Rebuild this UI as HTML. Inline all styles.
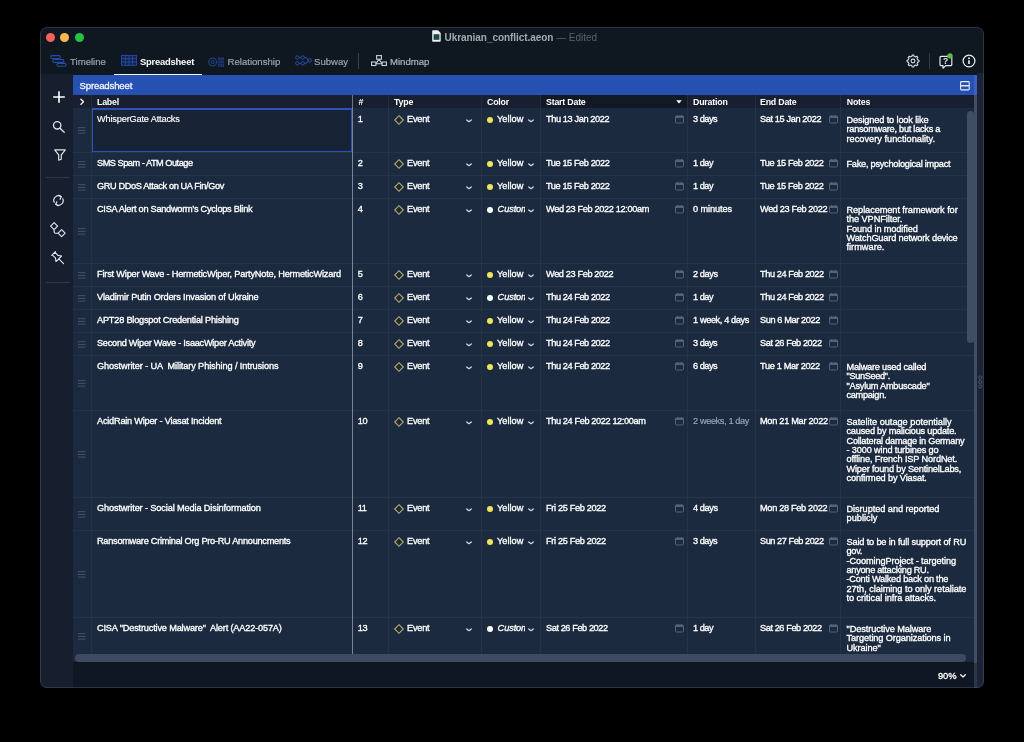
<!DOCTYPE html>
<html lang="en"><head><meta charset="utf-8"><title>Ukranian_conflict.aeon</title>
<style>
*{box-sizing:border-box;margin:0;padding:0}
html,body{width:1024px;height:742px;background:#000;overflow:hidden}
body{font-family:"Liberation Sans",sans-serif;color:#fff;position:relative}
.abs{position:absolute}
#win{position:absolute;left:40px;top:27px;width:944px;height:661px;background:#0f1721;border-radius:7px;overflow:hidden;will-change:transform}
#winborder{position:absolute;left:40px;top:27px;width:944px;height:661px;border-radius:7px;border:1px solid rgba(120,130,150,.28);pointer-events:none}
.tl{position:absolute;width:9px;height:9px;border-radius:50%;top:6px}
#title{position:absolute;left:404.5px;top:2px;height:18px;line-height:18px;font-size:10px;font-weight:bold;color:#a3a7ae;white-space:pre;letter-spacing:-0.05px}
#title i{font-style:normal;font-weight:normal;color:#5b606b}
.tab{position:absolute;top:27.5px;height:14px;line-height:14px;font-size:9.6px;color:#9aa2b1;white-space:pre;-webkit-text-stroke:0.2px #9aa2b1}
.tab.on{color:#fff;font-weight:bold;font-size:9.4px;letter-spacing:-0.2px;-webkit-text-stroke:0}
#side{position:absolute;left:0;top:47px;width:33px;height:614px;background:#171f2e}
#rstrip{position:absolute;left:936.5px;top:46px;width:8px;height:615px;background:#1a2436}
#vline{position:absolute;left:933.5px;top:68px;width:3px;height:567.5px;background:#414d65}
#vline2{position:absolute;left:933.5px;top:635.5px;width:3px;height:26px;background:#2b364b}
#bluehdr{position:absolute;left:33px;top:48px;width:903.5px;height:20px;background:#2650b2}
#bluehdr span{position:absolute;left:6.5px;top:3.5px;line-height:14px;font-size:9.6px;color:#f2f5fb;letter-spacing:-0.15px;-webkit-text-stroke:0.3px #f2f5fb}
#colhdr{position:absolute;left:33px;top:68px;width:900.5px;height:13px;background:#181f30}
.ch{position:absolute;top:1px;height:13px;line-height:13.5px;font-size:8.8px;font-weight:bold;color:#fff;white-space:pre;letter-spacing:-0.2px}
#grid{position:absolute;left:33px;top:81px;width:900.5px;height:554px;background:#1b2a3e;overflow:hidden}
.row{position:absolute;left:0;width:900.5px;border-top:1px solid #263449}
.hcol{position:absolute;left:0;top:0;width:18.5px;height:100%;background:#1c2a40;border-right:1px solid #243247}
.vl{position:absolute;top:0;width:1px;height:554px;background:#253348}
.c{position:absolute;top:6.4px;line-height:9.4px;font-size:9.2px;color:#fff;white-space:pre;-webkit-text-stroke:0.32px #fff}
.lab{left:24px;letter-spacing:-0.12px;top:6.4px}
.num{left:284.7px;letter-spacing:-0.35px;top:6.4px}
.typ{left:334px;top:6.4px}
.col{left:424px;top:6.4px}
.col.cu{font-style:italic;letter-spacing:-0.1px}
.sd{left:473px;letter-spacing:-0.29px}
.du{left:620px;letter-spacing:-0.2px}
.ed{left:687px;letter-spacing:-0.29px}
.nt{left:773.5px;letter-spacing:-0.07px;top:6.8px}
.dim{color:#97a0b0;-webkit-text-stroke:0.2px #97a0b0}
svg{position:absolute;overflow:visible}
#foot{position:absolute;left:33px;top:635.5px;width:900.5px;height:25.5px;background:#101724}
#foot span{position:absolute;left:865px;top:7px;font-size:9.4px;line-height:12px;color:#fff;letter-spacing:-0.15px;-webkit-text-stroke:0.3px #fff}
</style></head>
<body>
<div id="win">

<div class="tl" style="left:5.9px;background:#f4625c"></div>
<div class="tl" style="left:20.1px;background:#f7b84b"></div>
<div class="tl" style="left:34.7px;background:#25c045"></div>
<svg style="left:391.5px;top:3px" width="9" height="12" viewBox="0 0 9 12"><path d="M1 0.3h5l2.7 2.7v7.9a.8.8 0 0 1-.8.8H1a.8.8 0 0 1-.8-.8V1.100a.8.8 0 0 1 .8-.8z" fill="#eef0f3"/><rect x="1.600" y="4.200" width="5.800" height="5.600" fill="#1d4a44"/></svg>
<div id="title">Ukranian_conflict.aeon<i> — Edited</i></div>

<svg style="left:9.5px;top:27.5px" width="17" height="12" viewBox="0 0 17 12" fill="none" stroke="#264ca6" stroke-width="1.1"><rect x="0.8" y="0.6" width="9.500" height="2.900" rx="1.2"/><rect x="2.800" y="4.500" width="11" height="2.900" rx="1.2"/><rect x="7" y="8.400" width="9" height="2.900" rx="1.2"/></svg>
<div class="tab" style="left:30px">Timeline</div>
<svg style="left:81px;top:28px" width="16" height="11" viewBox="0 0 16 11"><rect x="0.5" y="0.5" width="15" height="9.800" fill="#12224a" stroke="#264ca6" stroke-width="0.9"/><path d="M0.5 3.700H15.500M0.5 7H15.500M4.300 0.5V10.300M8 0.5V10.300M11.700 0.5V10.300" stroke="#264ca6" stroke-width="0.9" fill="none"/></svg>
<div class="tab on" style="left:100px">Spreadsheet</div>
<div class="abs" style="left:73.500px;top:47px;width:88px;height:1.3px;background:#f4f6fa"></div>
<svg style="left:168px;top:29.5px" width="16" height="11" viewBox="0 0 16 11" fill="none" stroke="#23448f" stroke-width="1"><circle cx="4.600" cy="5" r="4"/><circle cx="4.600" cy="5" r="1.5"/><path d="M10.300 0.8h2v2h-2zM13.500 0.8h2v2h-2zM10.300 4.100h2v2h-2zM13.500 4.100h2v2h-2zM10.300 7.400h2v2h-2zM13.500 7.400h2v2h-2z" stroke-width="0.8"/></svg>
<div class="tab" style="left:187.500px">Relationship</div>
<svg style="left:254.500px;top:28px" width="17" height="11" viewBox="0 0 17 11" fill="none" stroke="#264ca6" stroke-width="1"><circle cx="2.300" cy="2.600" r="1.700"/><circle cx="7.800" cy="2.600" r="1.700"/><path d="M4 2.600h2.100M9.500 2.600h1.500c1.500 0 1.500 2.800 3 2.800"/><circle cx="2.300" cy="8.300" r="1.700"/><circle cx="7.800" cy="8.300" r="1.700"/><path d="M4 8.300h2.100M9.500 8.300h1.500c1.500 0 1.500-2.900 3-2.900"/><rect x="13" y="3.800" width="3.200" height="3.200" rx="0.8"/></svg>
<div class="tab" style="left:274px">Subway</div>
<div class="abs" style="left:318px;top:26px;width:1px;height:16px;background:#364053"></div>
<svg style="left:331px;top:28px" width="16" height="11" viewBox="0 0 16 11" fill="none" stroke="#c9ced8" stroke-width="1.100"><rect x="5.600" y="0.6" width="4.800" height="3.600"/><rect x="0.6" y="7" width="4.300" height="3.500"/><rect x="11.100" y="7" width="4.300" height="3.500"/><path d="M8 4.200L4.900 8.700M8 4.200L11.100 8.700M4.900 8.700H11.100"/></svg>
<div class="tab" style="left:350px;color:#aeb5c2;-webkit-text-stroke-color:#aeb5c2">Mindmap</div>

<svg style="left:865.500px;top:27.100px" width="14" height="14" viewBox="-7 -7 14 14" fill="none" stroke="#d3d8e0" stroke-width="1.150" stroke-linejoin="round"><path d="M4.67 -1.12 L5.95 -0.80 L5.95 0.80 L4.67 1.12 L4.09 2.51 L4.77 3.64 L3.64 4.77 L2.51 4.09 L1.12 4.67 L0.80 5.95 L-0.80 5.95 L-1.12 4.67 L-2.51 4.09 L-3.64 4.77 L-4.77 3.64 L-4.09 2.51 L-4.67 1.12 L-5.95 0.80 L-5.95 -0.80 L-4.67 -1.12 L-4.09 -2.51 L-4.77 -3.64 L-3.64 -4.77 L-2.51 -4.09 L-1.12 -4.67 L-0.80 -5.95 L0.80 -5.95 L1.12 -4.67 L2.51 -4.09 L3.64 -4.77 L4.77 -3.64 L4.09 -2.51z"/><circle r="1.900"/></svg>
<div class="abs" style="left:888.500px;top:26px;width:1px;height:16px;background:#2e3849"></div>
<svg style="left:898.500px;top:28px" width="15" height="15" viewBox="0 0 15 15" fill="none" stroke="#e3e7ee" stroke-width="1.200"><path d="M2.200 1.400h9.400a1.200 1.200 0 0 1 1.200 1.200v6.800a1.200 1.200 0 0 1-1.200 1.200h-4.900l-2.700 2.600v-2.600h-1.800a1.200 1.200 0 0 1-1.200-1.200v-6.800a1.200 1.200 0 0 1 1.200-1.200z" stroke-linejoin="round"/><text x="6.700" y="9.200" font-family="Liberation Sans, sans-serif" font-size="8.500" font-weight="bold" fill="#e3e7ee" stroke="none" text-anchor="middle">?</text><circle cx="11" cy="0.9" r="2.700" fill="#63b945" stroke="none"/></svg>
<svg style="left:922.300px;top:27.200px" width="14" height="14" viewBox="-7 -7 14 14" fill="none" stroke="#f1f3f7" stroke-width="1.200"><circle r="5.900"/><path d="M0 -0.700V3.100" stroke-width="1.600"/><circle cy="-2.700" r="0.950" fill="#f1f3f7" stroke="none"/></svg>

<div id="side">
<svg style="left:12.500px;top:16.5px" width="12" height="12" viewBox="0 0 12 12" stroke="#fff" stroke-width="1.600" fill="none"><path d="M6 0.200V11.800M0.200 6H11.800"/></svg>
<svg style="left:12px;top:45.5px" width="13" height="13" viewBox="0 0 13 13" stroke="#dfe3ea" stroke-width="1.300" fill="none"><circle cx="5.200" cy="5.300" r="3.700"/><path d="M8 8.200L12.200 12.300" stroke-linecap="round"/></svg>
<svg style="left:13.500px;top:75px" width="12" height="12" viewBox="0 0 12 12" stroke="#dfe3ea" stroke-width="1.200" fill="none" stroke-linejoin="round"><path d="M0.700 0.900H11.300L7.300 5.800V10.200L4.700 11.200V5.800z"/></svg>
<div class="abs" style="left:5.500px;top:103px;width:24px;height:1px;background:#2f394b"></div>
<svg style="left:11.500px;top:120px" width="13" height="13" viewBox="-6.500 -6.500 13 13" stroke="#dfe3ea" stroke-width="1.200" fill="none" stroke-linecap="round" stroke-linejoin="round"><path d="M-4.300 1.800A4.600 4.600 0 0 1 2.600 -3.800M4.300 -1.800A4.600 4.600 0 0 1 -2.600 3.800"/><path d="M0.300 -5.300L2.800 -3.700 1.600 -1.200M-0.300 5.300L-2.800 3.700 -1.600 1.200"/></svg>
<svg style="left:10px;top:148px" width="16" height="16" viewBox="0 0 16 16" stroke="#dfe3ea" stroke-width="1.150" fill="none" stroke-linejoin="round"><path d="M4.100 0.700L7.600 4.200 4.100 7.700 0.600 4.200zM11.600 7.700L15.100 11.200 11.600 14.700 8.100 11.200z"/><path d="M4.100 7.700V9.700Q4.100 11.200 5.600 11.200H8.100"/></svg>
<svg style="left:10.500px;top:176.5px" width="15" height="15" viewBox="-7.500 -7.500 15 15" stroke="#dfe3ea" stroke-width="1.150" fill="none" stroke-linejoin="round" stroke-linecap="round"><g transform="rotate(-45)"><path d="M-2.600 -7H2.600M-1.800 -7V-2.600L-3.900 0.400H3.900L1.800 -2.600V-7M0 0.400V7.200"/></g></svg>
<div class="abs" style="left:5.500px;top:207.5px;width:24px;height:1px;background:#2f394b"></div>
</div>
<div id="rstrip"><svg style="left:1.300px;top:302px" width="5" height="14" viewBox="0 0 5 14" fill="none" stroke="#4f5b73" stroke-width="0.9"><circle cx="2.300" cy="2.500" r="1.600"/><circle cx="2.300" cy="7" r="1.600"/><circle cx="2.300" cy="11.500" r="1.600"/></svg></div>
<div id="vline"></div><div id="vline2"></div>
<div id="bluehdr"><span>Spreadsheet</span>
<svg style="left:887px;top:5.500px" width="10" height="10" viewBox="0 0 10 10" fill="none" stroke="#e4eaf7" stroke-width="1.100"><rect x="0.600" y="0.600" width="8.600" height="8.300" rx="0.8"/><path d="M0.600 4.750H9.200" stroke-width="1.700"/></svg>
</div>
<div class="abs" style="left:933.500px;top:48px;width:3px;height:20px;background:#3a60c6"></div>
<div id="colhdr">
<div class="abs" style="left:467.500px;top:0;width:146.500px;height:13px;background:#111925"></div>
<svg style="left:6.500px;top:3.200px" width="5" height="8" viewBox="0 0 5 8" fill="none" stroke="#fff" stroke-width="1.300" stroke-linecap="round" stroke-linejoin="round"><path d="M0.900 1.200L3.500 3.800 0.900 6.400"/></svg>
<div class="ch" style="left:24px">Label</div>
<div class="ch" style="left:285.5px">#</div>
<div class="ch" style="left:321px">Type</div>
<div class="ch" style="left:414px">Color</div>
<div class="ch" style="left:473px">Start Date</div>
<div class="ch" style="left:620px">Duration</div>
<div class="ch" style="left:687px">End Date</div>
<div class="ch" style="left:773.75px">Notes</div>
<svg style="left:602.500px;top:5px" width="6" height="4" viewBox="0 0 6 4"><path d="M0.200 0.300H5.800L3 3.500z" fill="#fff"/></svg>
<div class="abs" style="left:18px;top:0;width:1px;height:13px;background:#222d42"></div>
<div class="abs" style="left:279.4px;top:0;width:0.9px;height:13px;background:#6b7585"></div>
<div class="abs" style="left:314.5px;top:0;width:1px;height:13px;background:#222d42"></div>
<div class="abs" style="left:408px;top:0;width:1px;height:13px;background:#222d42"></div>
<div class="abs" style="left:467px;top:0;width:1px;height:13px;background:#222d42"></div>
<div class="abs" style="left:613.5px;top:0;width:1px;height:13px;background:#222d42"></div>
<div class="abs" style="left:682px;top:0;width:1px;height:13px;background:#222d42"></div>
<div class="abs" style="left:767px;top:0;width:1px;height:13px;background:#222d42"></div>
</div>
<div id="grid">
<div class="row" style="top:0px;height:44px;border-top-color:#1b2a3e">
<div class="hcol"></div>
<svg style="left:5px;top:18.3px" width="8" height="7" viewBox="0 0 8 7" stroke="#465266" stroke-width="1" fill="none"><path d="M0 0.700H7.500M0 3.400H7.500M0 6.100H7.500"/></svg>
<div class="c lab"><span style="letter-spacing:-0.164px">WhisperGate Attacks</span></div>
<div class="c num">1</div>
<svg style="left:321px;top:5.500px" width="10" height="10" viewBox="0 0 10 10" fill="#25291f" stroke="#aca78c" stroke-width="1.100"><path d="M5 0.700L9.300 5 5 9.300 0.700 5z"/></svg>
<div class="c typ"><span style="letter-spacing:-0.225px">Event</span></div>
<svg style="left:393px;top:10px" width="6" height="4" viewBox="0 0 6 4" fill="none" stroke="#d4d9e2" stroke-width="1.300" stroke-linecap="round" stroke-linejoin="round"><path d="M0.700 0.900L3 2.700 5.300 0.900"/></svg>
<div class="abs" style="left:413.700px;top:8px;width:6.200px;height:6.200px;border-radius:50%;background:#ece466;box-shadow:0 0 0 0.600px #2c2f1a"></div>
<div class="c col"><span style="letter-spacing:0.023px">Yellow</span></div>
<svg style="left:454.5px;top:10px" width="6" height="4" viewBox="0 0 6 4" fill="none" stroke="#d4d9e2" stroke-width="1.300" stroke-linecap="round" stroke-linejoin="round"><path d="M0.700 0.900L3 2.700 5.300 0.900"/></svg>
<div class="c sd"><span style="letter-spacing:-0.383px">Thu 13 Jan 2022</span></div>
<svg style="left:601.5px;top:6.200px" width="9" height="8.500" viewBox="0 0 9 8.500" fill="none" stroke="#55637a" stroke-width="1"><rect x="0.5" y="1" width="8" height="7" rx="0.9"/><rect x="0.5" y="1" width="8" height="2" fill="#55637a" stroke="none"/><path d="M2.600 0V1.200M6.400 0V1.200"/></svg>
<div class="c du"><span style="letter-spacing:-0.496px">3 days</span></div>
<div class="c ed"><span style="letter-spacing:-0.38px">Sat 15 Jan 2022</span></div>
<svg style="left:755.5px;top:6.200px" width="9" height="8.500" viewBox="0 0 9 8.500" fill="none" stroke="#55637a" stroke-width="1"><rect x="0.5" y="1" width="8" height="7" rx="0.9"/><rect x="0.5" y="1" width="8" height="2" fill="#55637a" stroke="none"/><path d="M2.600 0V1.200M6.400 0V1.200"/></svg>
<div class="c nt"><span style="letter-spacing:-0.134px">Designed to look like</span><br><span style="letter-spacing:-0.258px">ransomware, but lacks a</span><br><span style="letter-spacing:0.019px">recovery functionality.</span></div>
</div>
<div class="row" style="top:44px;height:23px">
<div class="hcol"></div>
<svg style="left:5px;top:7.8px" width="8" height="7" viewBox="0 0 8 7" stroke="#465266" stroke-width="1" fill="none"><path d="M0 0.700H7.500M0 3.400H7.500M0 6.100H7.500"/></svg>
<div class="c lab"><span style="letter-spacing:-0.472px">SMS Spam - ATM Outage</span></div>
<div class="c num">2</div>
<svg style="left:321px;top:5.500px" width="10" height="10" viewBox="0 0 10 10" fill="#25291f" stroke="#aca78c" stroke-width="1.100"><path d="M5 0.700L9.300 5 5 9.300 0.700 5z"/></svg>
<div class="c typ"><span style="letter-spacing:-0.225px">Event</span></div>
<svg style="left:393px;top:10px" width="6" height="4" viewBox="0 0 6 4" fill="none" stroke="#d4d9e2" stroke-width="1.300" stroke-linecap="round" stroke-linejoin="round"><path d="M0.700 0.900L3 2.700 5.300 0.900"/></svg>
<div class="abs" style="left:413.700px;top:8px;width:6.200px;height:6.200px;border-radius:50%;background:#ece466;box-shadow:0 0 0 0.600px #2c2f1a"></div>
<div class="c col"><span style="letter-spacing:0.023px">Yellow</span></div>
<svg style="left:454.5px;top:10px" width="6" height="4" viewBox="0 0 6 4" fill="none" stroke="#d4d9e2" stroke-width="1.300" stroke-linecap="round" stroke-linejoin="round"><path d="M0.700 0.900L3 2.700 5.300 0.900"/></svg>
<div class="c sd"><span style="letter-spacing:-0.414px">Tue 15 Feb 2022</span></div>
<svg style="left:601.5px;top:6.200px" width="9" height="8.500" viewBox="0 0 9 8.500" fill="none" stroke="#55637a" stroke-width="1"><rect x="0.5" y="1" width="8" height="7" rx="0.9"/><rect x="0.5" y="1" width="8" height="2" fill="#55637a" stroke="none"/><path d="M2.600 0V1.200M6.400 0V1.200"/></svg>
<div class="c du"><span style="letter-spacing:-0.471px">1 day</span></div>
<div class="c ed"><span style="letter-spacing:-0.414px">Tue 15 Feb 2022</span></div>
<svg style="left:755.5px;top:6.200px" width="9" height="8.500" viewBox="0 0 9 8.500" fill="none" stroke="#55637a" stroke-width="1"><rect x="0.5" y="1" width="8" height="7" rx="0.9"/><rect x="0.5" y="1" width="8" height="2" fill="#55637a" stroke="none"/><path d="M2.600 0V1.200M6.400 0V1.200"/></svg>
<div class="c nt"><span style="letter-spacing:-0.249px">Fake, psychological impact</span></div>
</div>
<div class="row" style="top:67px;height:23px">
<div class="hcol"></div>
<svg style="left:5px;top:7.8px" width="8" height="7" viewBox="0 0 8 7" stroke="#465266" stroke-width="1" fill="none"><path d="M0 0.700H7.500M0 3.400H7.500M0 6.100H7.500"/></svg>
<div class="c lab"><span style="letter-spacing:-0.357px">GRU DDoS Attack on UA Fin/Gov</span></div>
<div class="c num">3</div>
<svg style="left:321px;top:5.500px" width="10" height="10" viewBox="0 0 10 10" fill="#25291f" stroke="#aca78c" stroke-width="1.100"><path d="M5 0.700L9.300 5 5 9.300 0.700 5z"/></svg>
<div class="c typ"><span style="letter-spacing:-0.225px">Event</span></div>
<svg style="left:393px;top:10px" width="6" height="4" viewBox="0 0 6 4" fill="none" stroke="#d4d9e2" stroke-width="1.300" stroke-linecap="round" stroke-linejoin="round"><path d="M0.700 0.900L3 2.700 5.300 0.900"/></svg>
<div class="abs" style="left:413.700px;top:8px;width:6.200px;height:6.200px;border-radius:50%;background:#ece466;box-shadow:0 0 0 0.600px #2c2f1a"></div>
<div class="c col"><span style="letter-spacing:0.023px">Yellow</span></div>
<svg style="left:454.5px;top:10px" width="6" height="4" viewBox="0 0 6 4" fill="none" stroke="#d4d9e2" stroke-width="1.300" stroke-linecap="round" stroke-linejoin="round"><path d="M0.700 0.900L3 2.700 5.300 0.900"/></svg>
<div class="c sd"><span style="letter-spacing:-0.414px">Tue 15 Feb 2022</span></div>
<svg style="left:601.5px;top:6.200px" width="9" height="8.500" viewBox="0 0 9 8.500" fill="none" stroke="#55637a" stroke-width="1"><rect x="0.5" y="1" width="8" height="7" rx="0.9"/><rect x="0.5" y="1" width="8" height="2" fill="#55637a" stroke="none"/><path d="M2.600 0V1.200M6.400 0V1.200"/></svg>
<div class="c du"><span style="letter-spacing:-0.471px">1 day</span></div>
<div class="c ed"><span style="letter-spacing:-0.414px">Tue 15 Feb 2022</span></div>
<svg style="left:755.5px;top:6.200px" width="9" height="8.500" viewBox="0 0 9 8.500" fill="none" stroke="#55637a" stroke-width="1"><rect x="0.5" y="1" width="8" height="7" rx="0.9"/><rect x="0.5" y="1" width="8" height="2" fill="#55637a" stroke="none"/><path d="M2.600 0V1.200M6.400 0V1.200"/></svg>
</div>
<div class="row" style="top:90px;height:65px">
<div class="hcol"></div>
<svg style="left:5px;top:28.8px" width="8" height="7" viewBox="0 0 8 7" stroke="#465266" stroke-width="1" fill="none"><path d="M0 0.700H7.500M0 3.400H7.500M0 6.100H7.500"/></svg>
<div class="c lab"><span style="letter-spacing:-0.262px">CISA Alert on Sandworm’s Cyclops Blink</span></div>
<div class="c num">4</div>
<svg style="left:321px;top:5.500px" width="10" height="10" viewBox="0 0 10 10" fill="#25291f" stroke="#aca78c" stroke-width="1.100"><path d="M5 0.700L9.300 5 5 9.300 0.700 5z"/></svg>
<div class="c typ"><span style="letter-spacing:-0.225px">Event</span></div>
<svg style="left:393px;top:10px" width="6" height="4" viewBox="0 0 6 4" fill="none" stroke="#d4d9e2" stroke-width="1.300" stroke-linecap="round" stroke-linejoin="round"><path d="M0.700 0.900L3 2.700 5.300 0.900"/></svg>
<div class="abs" style="left:413.700px;top:8px;width:6.200px;height:6.200px;border-radius:50%;background:#fff"></div>
<div class="c col cu" style="width:27.500px;overflow:hidden;padding-left:0.600px">Custom</div>
<svg style="left:454.5px;top:10px" width="6" height="4" viewBox="0 0 6 4" fill="none" stroke="#d4d9e2" stroke-width="1.300" stroke-linecap="round" stroke-linejoin="round"><path d="M0.700 0.900L3 2.700 5.300 0.900"/></svg>
<div class="c sd"><span style="letter-spacing:-0.356px">Wed 23 Feb 2022 12:00am</span></div>
<svg style="left:601.5px;top:6.200px" width="9" height="8.500" viewBox="0 0 9 8.500" fill="none" stroke="#55637a" stroke-width="1"><rect x="0.5" y="1" width="8" height="7" rx="0.9"/><rect x="0.5" y="1" width="8" height="2" fill="#55637a" stroke="none"/><path d="M2.600 0V1.200M6.400 0V1.200"/></svg>
<div class="c du"><span style="letter-spacing:-0.093px">0 minutes</span></div>
<div class="c ed"><span style="letter-spacing:-0.377px">Wed 23 Feb 2022</span></div>
<svg style="left:755.5px;top:6.200px" width="9" height="8.500" viewBox="0 0 9 8.500" fill="none" stroke="#55637a" stroke-width="1"><rect x="0.5" y="1" width="8" height="7" rx="0.9"/><rect x="0.5" y="1" width="8" height="2" fill="#55637a" stroke="none"/><path d="M2.600 0V1.200M6.400 0V1.200"/></svg>
<div class="c nt"><span style="letter-spacing:-0.068px">Replacement framework for</span><br><span style="letter-spacing:-0.068px">the VPNFilter.</span><br><span style="letter-spacing:-0.109px">Found in modified</span><br><span style="letter-spacing:-0.162px">WatchGuard network device</span><br><span style="letter-spacing:0.015px">firmware.</span></div>
</div>
<div class="row" style="top:155px;height:23px">
<div class="hcol"></div>
<svg style="left:5px;top:7.8px" width="8" height="7" viewBox="0 0 8 7" stroke="#465266" stroke-width="1" fill="none"><path d="M0 0.700H7.500M0 3.400H7.500M0 6.100H7.500"/></svg>
<div class="c lab"><span style="letter-spacing:-0.186px">First Wiper Wave - HermeticWiper, PartyNote, HermeticWizard</span></div>
<div class="c num">5</div>
<svg style="left:321px;top:5.500px" width="10" height="10" viewBox="0 0 10 10" fill="#25291f" stroke="#aca78c" stroke-width="1.100"><path d="M5 0.700L9.300 5 5 9.300 0.700 5z"/></svg>
<div class="c typ"><span style="letter-spacing:-0.225px">Event</span></div>
<svg style="left:393px;top:10px" width="6" height="4" viewBox="0 0 6 4" fill="none" stroke="#d4d9e2" stroke-width="1.300" stroke-linecap="round" stroke-linejoin="round"><path d="M0.700 0.900L3 2.700 5.300 0.900"/></svg>
<div class="abs" style="left:413.700px;top:8px;width:6.200px;height:6.200px;border-radius:50%;background:#ece466;box-shadow:0 0 0 0.600px #2c2f1a"></div>
<div class="c col"><span style="letter-spacing:0.023px">Yellow</span></div>
<svg style="left:454.5px;top:10px" width="6" height="4" viewBox="0 0 6 4" fill="none" stroke="#d4d9e2" stroke-width="1.300" stroke-linecap="round" stroke-linejoin="round"><path d="M0.700 0.900L3 2.700 5.300 0.900"/></svg>
<div class="c sd"><span style="letter-spacing:-0.377px">Wed 23 Feb 2022</span></div>
<svg style="left:601.5px;top:6.200px" width="9" height="8.500" viewBox="0 0 9 8.500" fill="none" stroke="#55637a" stroke-width="1"><rect x="0.5" y="1" width="8" height="7" rx="0.9"/><rect x="0.5" y="1" width="8" height="2" fill="#55637a" stroke="none"/><path d="M2.600 0V1.200M6.400 0V1.200"/></svg>
<div class="c du"><span style="letter-spacing:-0.396px">2 days</span></div>
<div class="c ed"><span style="letter-spacing:-0.42px">Thu 24 Feb 2022</span></div>
<svg style="left:755.5px;top:6.200px" width="9" height="8.500" viewBox="0 0 9 8.500" fill="none" stroke="#55637a" stroke-width="1"><rect x="0.5" y="1" width="8" height="7" rx="0.9"/><rect x="0.5" y="1" width="8" height="2" fill="#55637a" stroke="none"/><path d="M2.600 0V1.200M6.400 0V1.200"/></svg>
</div>
<div class="row" style="top:178px;height:23px">
<div class="hcol"></div>
<svg style="left:5px;top:7.8px" width="8" height="7" viewBox="0 0 8 7" stroke="#465266" stroke-width="1" fill="none"><path d="M0 0.700H7.500M0 3.400H7.500M0 6.100H7.500"/></svg>
<div class="c lab"><span style="letter-spacing:-0.173px">Vladimir Putin Orders Invasion of Ukraine</span></div>
<div class="c num">6</div>
<svg style="left:321px;top:5.500px" width="10" height="10" viewBox="0 0 10 10" fill="#25291f" stroke="#aca78c" stroke-width="1.100"><path d="M5 0.700L9.300 5 5 9.300 0.700 5z"/></svg>
<div class="c typ"><span style="letter-spacing:-0.225px">Event</span></div>
<svg style="left:393px;top:10px" width="6" height="4" viewBox="0 0 6 4" fill="none" stroke="#d4d9e2" stroke-width="1.300" stroke-linecap="round" stroke-linejoin="round"><path d="M0.700 0.900L3 2.700 5.300 0.900"/></svg>
<div class="abs" style="left:413.700px;top:8px;width:6.200px;height:6.200px;border-radius:50%;background:#fff"></div>
<div class="c col cu" style="width:27.500px;overflow:hidden;padding-left:0.600px">Custom</div>
<svg style="left:454.5px;top:10px" width="6" height="4" viewBox="0 0 6 4" fill="none" stroke="#d4d9e2" stroke-width="1.300" stroke-linecap="round" stroke-linejoin="round"><path d="M0.700 0.900L3 2.700 5.300 0.900"/></svg>
<div class="c sd"><span style="letter-spacing:-0.42px">Thu 24 Feb 2022</span></div>
<svg style="left:601.5px;top:6.200px" width="9" height="8.500" viewBox="0 0 9 8.500" fill="none" stroke="#55637a" stroke-width="1"><rect x="0.5" y="1" width="8" height="7" rx="0.9"/><rect x="0.5" y="1" width="8" height="2" fill="#55637a" stroke="none"/><path d="M2.600 0V1.200M6.400 0V1.200"/></svg>
<div class="c du"><span style="letter-spacing:-0.471px">1 day</span></div>
<div class="c ed"><span style="letter-spacing:-0.42px">Thu 24 Feb 2022</span></div>
<svg style="left:755.5px;top:6.200px" width="9" height="8.500" viewBox="0 0 9 8.500" fill="none" stroke="#55637a" stroke-width="1"><rect x="0.5" y="1" width="8" height="7" rx="0.9"/><rect x="0.5" y="1" width="8" height="2" fill="#55637a" stroke="none"/><path d="M2.600 0V1.200M6.400 0V1.200"/></svg>
</div>
<div class="row" style="top:201px;height:23px">
<div class="hcol"></div>
<svg style="left:5px;top:7.8px" width="8" height="7" viewBox="0 0 8 7" stroke="#465266" stroke-width="1" fill="none"><path d="M0 0.700H7.500M0 3.400H7.500M0 6.100H7.500"/></svg>
<div class="c lab"><span style="letter-spacing:-0.205px">APT28 Blogspot Credential Phishing</span></div>
<div class="c num">7</div>
<svg style="left:321px;top:5.500px" width="10" height="10" viewBox="0 0 10 10" fill="#25291f" stroke="#aca78c" stroke-width="1.100"><path d="M5 0.700L9.300 5 5 9.300 0.700 5z"/></svg>
<div class="c typ"><span style="letter-spacing:-0.225px">Event</span></div>
<svg style="left:393px;top:10px" width="6" height="4" viewBox="0 0 6 4" fill="none" stroke="#d4d9e2" stroke-width="1.300" stroke-linecap="round" stroke-linejoin="round"><path d="M0.700 0.900L3 2.700 5.300 0.900"/></svg>
<div class="abs" style="left:413.700px;top:8px;width:6.200px;height:6.200px;border-radius:50%;background:#ece466;box-shadow:0 0 0 0.600px #2c2f1a"></div>
<div class="c col"><span style="letter-spacing:0.023px">Yellow</span></div>
<svg style="left:454.5px;top:10px" width="6" height="4" viewBox="0 0 6 4" fill="none" stroke="#d4d9e2" stroke-width="1.300" stroke-linecap="round" stroke-linejoin="round"><path d="M0.700 0.900L3 2.700 5.300 0.900"/></svg>
<div class="c sd"><span style="letter-spacing:-0.42px">Thu 24 Feb 2022</span></div>
<svg style="left:601.5px;top:6.200px" width="9" height="8.500" viewBox="0 0 9 8.500" fill="none" stroke="#55637a" stroke-width="1"><rect x="0.5" y="1" width="8" height="7" rx="0.9"/><rect x="0.5" y="1" width="8" height="2" fill="#55637a" stroke="none"/><path d="M2.600 0V1.200M6.400 0V1.200"/></svg>
<div class="c du"><span style="letter-spacing:-0.381px">1 week, 4 days</span></div>
<div class="c ed"><span style="letter-spacing:-0.388px">Sun 6 Mar 2022</span></div>
<svg style="left:755.5px;top:6.200px" width="9" height="8.500" viewBox="0 0 9 8.500" fill="none" stroke="#55637a" stroke-width="1"><rect x="0.5" y="1" width="8" height="7" rx="0.9"/><rect x="0.5" y="1" width="8" height="2" fill="#55637a" stroke="none"/><path d="M2.600 0V1.200M6.400 0V1.200"/></svg>
</div>
<div class="row" style="top:224px;height:23px">
<div class="hcol"></div>
<svg style="left:5px;top:7.8px" width="8" height="7" viewBox="0 0 8 7" stroke="#465266" stroke-width="1" fill="none"><path d="M0 0.700H7.500M0 3.400H7.500M0 6.100H7.500"/></svg>
<div class="c lab"><span style="letter-spacing:-0.265px">Second Wiper Wave - IsaacWiper Activity</span></div>
<div class="c num">8</div>
<svg style="left:321px;top:5.500px" width="10" height="10" viewBox="0 0 10 10" fill="#25291f" stroke="#aca78c" stroke-width="1.100"><path d="M5 0.700L9.300 5 5 9.300 0.700 5z"/></svg>
<div class="c typ"><span style="letter-spacing:-0.225px">Event</span></div>
<svg style="left:393px;top:10px" width="6" height="4" viewBox="0 0 6 4" fill="none" stroke="#d4d9e2" stroke-width="1.300" stroke-linecap="round" stroke-linejoin="round"><path d="M0.700 0.900L3 2.700 5.300 0.900"/></svg>
<div class="abs" style="left:413.700px;top:8px;width:6.200px;height:6.200px;border-radius:50%;background:#ece466;box-shadow:0 0 0 0.600px #2c2f1a"></div>
<div class="c col"><span style="letter-spacing:0.023px">Yellow</span></div>
<svg style="left:454.5px;top:10px" width="6" height="4" viewBox="0 0 6 4" fill="none" stroke="#d4d9e2" stroke-width="1.300" stroke-linecap="round" stroke-linejoin="round"><path d="M0.700 0.900L3 2.700 5.300 0.900"/></svg>
<div class="c sd"><span style="letter-spacing:-0.42px">Thu 24 Feb 2022</span></div>
<svg style="left:601.5px;top:6.200px" width="9" height="8.500" viewBox="0 0 9 8.500" fill="none" stroke="#55637a" stroke-width="1"><rect x="0.5" y="1" width="8" height="7" rx="0.9"/><rect x="0.5" y="1" width="8" height="2" fill="#55637a" stroke="none"/><path d="M2.600 0V1.200M6.400 0V1.200"/></svg>
<div class="c du"><span style="letter-spacing:-0.496px">3 days</span></div>
<div class="c ed"><span style="letter-spacing:-0.417px">Sat 26 Feb 2022</span></div>
<svg style="left:755.5px;top:6.200px" width="9" height="8.500" viewBox="0 0 9 8.500" fill="none" stroke="#55637a" stroke-width="1"><rect x="0.5" y="1" width="8" height="7" rx="0.9"/><rect x="0.5" y="1" width="8" height="2" fill="#55637a" stroke="none"/><path d="M2.600 0V1.200M6.400 0V1.200"/></svg>
</div>
<div class="row" style="top:247px;height:55px">
<div class="hcol"></div>
<svg style="left:5px;top:23.8px" width="8" height="7" viewBox="0 0 8 7" stroke="#465266" stroke-width="1" fill="none"><path d="M0 0.700H7.500M0 3.400H7.500M0 6.100H7.500"/></svg>
<div class="c lab"><span style="letter-spacing:-0.112px">Ghostwriter - UA  Military Phishing / Intrusions</span></div>
<div class="c num">9</div>
<svg style="left:321px;top:5.500px" width="10" height="10" viewBox="0 0 10 10" fill="#25291f" stroke="#aca78c" stroke-width="1.100"><path d="M5 0.700L9.300 5 5 9.300 0.700 5z"/></svg>
<div class="c typ"><span style="letter-spacing:-0.225px">Event</span></div>
<svg style="left:393px;top:10px" width="6" height="4" viewBox="0 0 6 4" fill="none" stroke="#d4d9e2" stroke-width="1.300" stroke-linecap="round" stroke-linejoin="round"><path d="M0.700 0.900L3 2.700 5.300 0.900"/></svg>
<div class="abs" style="left:413.700px;top:8px;width:6.200px;height:6.200px;border-radius:50%;background:#ece466;box-shadow:0 0 0 0.600px #2c2f1a"></div>
<div class="c col"><span style="letter-spacing:0.023px">Yellow</span></div>
<svg style="left:454.5px;top:10px" width="6" height="4" viewBox="0 0 6 4" fill="none" stroke="#d4d9e2" stroke-width="1.300" stroke-linecap="round" stroke-linejoin="round"><path d="M0.700 0.900L3 2.700 5.300 0.900"/></svg>
<div class="c sd"><span style="letter-spacing:-0.42px">Thu 24 Feb 2022</span></div>
<svg style="left:601.5px;top:6.200px" width="9" height="8.500" viewBox="0 0 9 8.500" fill="none" stroke="#55637a" stroke-width="1"><rect x="0.5" y="1" width="8" height="7" rx="0.9"/><rect x="0.5" y="1" width="8" height="2" fill="#55637a" stroke="none"/><path d="M2.600 0V1.200M6.400 0V1.200"/></svg>
<div class="c du"><span style="letter-spacing:-0.496px">6 days</span></div>
<div class="c ed"><span style="letter-spacing:-0.341px">Tue 1 Mar 2022</span></div>
<svg style="left:755.5px;top:6.200px" width="9" height="8.500" viewBox="0 0 9 8.500" fill="none" stroke="#55637a" stroke-width="1"><rect x="0.5" y="1" width="8" height="7" rx="0.9"/><rect x="0.5" y="1" width="8" height="2" fill="#55637a" stroke="none"/><path d="M2.600 0V1.200M6.400 0V1.200"/></svg>
<div class="c nt"><span style="letter-spacing:-0.215px">Malware used called</span><br><span style="letter-spacing:-0.355px">&quot;SunSeed&quot;.</span><br><span style="letter-spacing:-0.236px">&quot;Asylum Ambuscade&quot;</span><br><span style="letter-spacing:-0.299px">campaign.</span></div>
</div>
<div class="row" style="top:302px;height:87px">
<div class="hcol"></div>
<svg style="left:5px;top:39.8px" width="8" height="7" viewBox="0 0 8 7" stroke="#465266" stroke-width="1" fill="none"><path d="M0 0.700H7.500M0 3.400H7.500M0 6.100H7.500"/></svg>
<div class="c lab"><span style="letter-spacing:-0.225px">AcidRain Wiper - Viasat Incident</span></div>
<div class="c num">10</div>
<svg style="left:321px;top:5.500px" width="10" height="10" viewBox="0 0 10 10" fill="#25291f" stroke="#aca78c" stroke-width="1.100"><path d="M5 0.700L9.300 5 5 9.300 0.700 5z"/></svg>
<div class="c typ"><span style="letter-spacing:-0.225px">Event</span></div>
<svg style="left:393px;top:10px" width="6" height="4" viewBox="0 0 6 4" fill="none" stroke="#d4d9e2" stroke-width="1.300" stroke-linecap="round" stroke-linejoin="round"><path d="M0.700 0.900L3 2.700 5.300 0.900"/></svg>
<div class="abs" style="left:413.700px;top:8px;width:6.200px;height:6.200px;border-radius:50%;background:#ece466;box-shadow:0 0 0 0.600px #2c2f1a"></div>
<div class="c col"><span style="letter-spacing:0.023px">Yellow</span></div>
<svg style="left:454.5px;top:10px" width="6" height="4" viewBox="0 0 6 4" fill="none" stroke="#d4d9e2" stroke-width="1.300" stroke-linecap="round" stroke-linejoin="round"><path d="M0.700 0.900L3 2.700 5.300 0.900"/></svg>
<div class="c sd"><span style="letter-spacing:-0.384px">Thu 24 Feb 2022 12:00am</span></div>
<svg style="left:601.5px;top:6.200px" width="9" height="8.500" viewBox="0 0 9 8.500" fill="none" stroke="#55637a" stroke-width="1"><rect x="0.5" y="1" width="8" height="7" rx="0.9"/><rect x="0.5" y="1" width="8" height="2" fill="#55637a" stroke="none"/><path d="M2.600 0V1.200M6.400 0V1.200"/></svg>
<div class="c du dim"><span style="letter-spacing:-0.381px">2 weeks, 1 day</span></div>
<div class="c ed"><span style="letter-spacing:-0.28px">Mon 21 Mar 2022</span></div>
<svg style="left:755.5px;top:6.200px" width="9" height="8.500" viewBox="0 0 9 8.500" fill="none" stroke="#55637a" stroke-width="1"><rect x="0.5" y="1" width="8" height="7" rx="0.9"/><rect x="0.5" y="1" width="8" height="2" fill="#55637a" stroke="none"/><path d="M2.600 0V1.200M6.400 0V1.200"/></svg>
<div class="c nt"><span style="letter-spacing:-0.005px">Satelite outage potentially</span><br><span style="letter-spacing:-0.225px">caused by malicious update.</span><br><span style="letter-spacing:-0.241px">Collateral damage in Germany</span><br><span style="letter-spacing:-0.151px">- 3000 wind turbines go</span><br><span style="letter-spacing:-0.139px">offline, French ISP NordNet.</span><br><span style="letter-spacing:-0.194px">Wiper found by SentinelLabs,</span><br><span style="letter-spacing:-0.141px">confirmed by Viasat.</span></div>
</div>
<div class="row" style="top:389px;height:33px">
<div class="hcol"></div>
<svg style="left:5px;top:12.8px" width="8" height="7" viewBox="0 0 8 7" stroke="#465266" stroke-width="1" fill="none"><path d="M0 0.700H7.500M0 3.400H7.500M0 6.100H7.500"/></svg>
<div class="c lab"><span style="letter-spacing:-0.129px">Ghostwriter - Social Media Disinformation</span></div>
<div class="c num">11</div>
<svg style="left:321px;top:5.500px" width="10" height="10" viewBox="0 0 10 10" fill="#25291f" stroke="#aca78c" stroke-width="1.100"><path d="M5 0.700L9.300 5 5 9.300 0.700 5z"/></svg>
<div class="c typ"><span style="letter-spacing:-0.225px">Event</span></div>
<svg style="left:393px;top:10px" width="6" height="4" viewBox="0 0 6 4" fill="none" stroke="#d4d9e2" stroke-width="1.300" stroke-linecap="round" stroke-linejoin="round"><path d="M0.700 0.900L3 2.700 5.300 0.900"/></svg>
<div class="abs" style="left:413.700px;top:8px;width:6.200px;height:6.200px;border-radius:50%;background:#ece466;box-shadow:0 0 0 0.600px #2c2f1a"></div>
<div class="c col"><span style="letter-spacing:0.023px">Yellow</span></div>
<svg style="left:454.5px;top:10px" width="6" height="4" viewBox="0 0 6 4" fill="none" stroke="#d4d9e2" stroke-width="1.300" stroke-linecap="round" stroke-linejoin="round"><path d="M0.700 0.900L3 2.700 5.300 0.900"/></svg>
<div class="c sd"><span style="letter-spacing:-0.341px">Fri 25 Feb 2022</span></div>
<svg style="left:601.5px;top:6.200px" width="9" height="8.500" viewBox="0 0 9 8.500" fill="none" stroke="#55637a" stroke-width="1"><rect x="0.5" y="1" width="8" height="7" rx="0.9"/><rect x="0.5" y="1" width="8" height="2" fill="#55637a" stroke="none"/><path d="M2.600 0V1.200M6.400 0V1.200"/></svg>
<div class="c du"><span style="letter-spacing:-0.396px">4 days</span></div>
<div class="c ed"><span style="letter-spacing:-0.317px">Mon 28 Feb 2022</span></div>
<svg style="left:755.5px;top:6.200px" width="9" height="8.500" viewBox="0 0 9 8.500" fill="none" stroke="#55637a" stroke-width="1"><rect x="0.5" y="1" width="8" height="7" rx="0.9"/><rect x="0.5" y="1" width="8" height="2" fill="#55637a" stroke="none"/><path d="M2.600 0V1.200M6.400 0V1.200"/></svg>
<div class="c nt"><span style="letter-spacing:-0.052px">Disrupted and reported</span><br><span style="letter-spacing:0.023px">publicly</span></div>
</div>
<div class="row" style="top:422px;height:87px">
<div class="hcol"></div>
<svg style="left:5px;top:39.8px" width="8" height="7" viewBox="0 0 8 7" stroke="#465266" stroke-width="1" fill="none"><path d="M0 0.700H7.500M0 3.400H7.500M0 6.100H7.500"/></svg>
<div class="c lab"><span style="letter-spacing:-0.265px">Ransomware Criminal Org Pro-RU Announcments</span></div>
<div class="c num">12</div>
<svg style="left:321px;top:5.500px" width="10" height="10" viewBox="0 0 10 10" fill="#25291f" stroke="#aca78c" stroke-width="1.100"><path d="M5 0.700L9.300 5 5 9.300 0.700 5z"/></svg>
<div class="c typ"><span style="letter-spacing:-0.225px">Event</span></div>
<svg style="left:393px;top:10px" width="6" height="4" viewBox="0 0 6 4" fill="none" stroke="#d4d9e2" stroke-width="1.300" stroke-linecap="round" stroke-linejoin="round"><path d="M0.700 0.900L3 2.700 5.300 0.900"/></svg>
<div class="abs" style="left:413.700px;top:8px;width:6.200px;height:6.200px;border-radius:50%;background:#ece466;box-shadow:0 0 0 0.600px #2c2f1a"></div>
<div class="c col"><span style="letter-spacing:0.023px">Yellow</span></div>
<svg style="left:454.5px;top:10px" width="6" height="4" viewBox="0 0 6 4" fill="none" stroke="#d4d9e2" stroke-width="1.300" stroke-linecap="round" stroke-linejoin="round"><path d="M0.700 0.900L3 2.700 5.300 0.900"/></svg>
<div class="c sd"><span style="letter-spacing:-0.341px">Fri 25 Feb 2022</span></div>
<svg style="left:601.5px;top:6.200px" width="9" height="8.500" viewBox="0 0 9 8.500" fill="none" stroke="#55637a" stroke-width="1"><rect x="0.5" y="1" width="8" height="7" rx="0.9"/><rect x="0.5" y="1" width="8" height="2" fill="#55637a" stroke="none"/><path d="M2.600 0V1.200M6.400 0V1.200"/></svg>
<div class="c du"><span style="letter-spacing:-0.496px">3 days</span></div>
<div class="c ed"><span style="letter-spacing:-0.457px">Sun 27 Feb 2022</span></div>
<svg style="left:755.5px;top:6.200px" width="9" height="8.500" viewBox="0 0 9 8.500" fill="none" stroke="#55637a" stroke-width="1"><rect x="0.5" y="1" width="8" height="7" rx="0.9"/><rect x="0.5" y="1" width="8" height="2" fill="#55637a" stroke="none"/><path d="M2.600 0V1.200M6.400 0V1.200"/></svg>
<div class="c nt"><span style="letter-spacing:-0.156px">Said to be in full support of RU</span><br><span style="letter-spacing:-0.262px">gov.</span><br><span style="letter-spacing:-0.109px">-CoomingProject - targeting</span><br><span style="letter-spacing:-0.281px">anyone attacking RU.</span><br><span style="letter-spacing:-0.23px">-Conti Walked back on the</span><br><span style="letter-spacing:-0.056px">27th, claiming to only retaliate</span><br><span style="letter-spacing:-0.052px">to critical infra attacks.</span></div>
</div>
<div class="row" style="top:509px;height:37px">
<div class="hcol"></div>
<svg style="left:5px;top:14.8px" width="8" height="7" viewBox="0 0 8 7" stroke="#465266" stroke-width="1" fill="none"><path d="M0 0.700H7.500M0 3.400H7.500M0 6.100H7.500"/></svg>
<div class="c lab"><span style="letter-spacing:-0.171px">CISA &quot;Destructive Malware&quot;  Alert (AA22-057A)</span></div>
<div class="c num">13</div>
<svg style="left:321px;top:5.500px" width="10" height="10" viewBox="0 0 10 10" fill="#25291f" stroke="#aca78c" stroke-width="1.100"><path d="M5 0.700L9.300 5 5 9.300 0.700 5z"/></svg>
<div class="c typ"><span style="letter-spacing:-0.225px">Event</span></div>
<svg style="left:393px;top:10px" width="6" height="4" viewBox="0 0 6 4" fill="none" stroke="#d4d9e2" stroke-width="1.300" stroke-linecap="round" stroke-linejoin="round"><path d="M0.700 0.900L3 2.700 5.300 0.900"/></svg>
<div class="abs" style="left:413.700px;top:8px;width:6.200px;height:6.200px;border-radius:50%;background:#fff"></div>
<div class="c col cu" style="width:27.500px;overflow:hidden;padding-left:0.600px">Custom</div>
<svg style="left:454.5px;top:10px" width="6" height="4" viewBox="0 0 6 4" fill="none" stroke="#d4d9e2" stroke-width="1.300" stroke-linecap="round" stroke-linejoin="round"><path d="M0.700 0.900L3 2.700 5.300 0.900"/></svg>
<div class="c sd"><span style="letter-spacing:-0.417px">Sat 26 Feb 2022</span></div>
<svg style="left:601.5px;top:6.200px" width="9" height="8.500" viewBox="0 0 9 8.500" fill="none" stroke="#55637a" stroke-width="1"><rect x="0.5" y="1" width="8" height="7" rx="0.9"/><rect x="0.5" y="1" width="8" height="2" fill="#55637a" stroke="none"/><path d="M2.600 0V1.200M6.400 0V1.200"/></svg>
<div class="c du"><span style="letter-spacing:-0.471px">1 day</span></div>
<div class="c ed"><span style="letter-spacing:-0.417px">Sat 26 Feb 2022</span></div>
<svg style="left:755.5px;top:6.200px" width="9" height="8.500" viewBox="0 0 9 8.500" fill="none" stroke="#55637a" stroke-width="1"><rect x="0.5" y="1" width="8" height="7" rx="0.9"/><rect x="0.5" y="1" width="8" height="2" fill="#55637a" stroke="none"/><path d="M2.600 0V1.200M6.400 0V1.200"/></svg>
<div class="c nt"><span style="letter-spacing:-0.083px">&quot;Destructive Malware</span><br><span style="letter-spacing:-0.106px">Targeting Organizations in</span><br><span style="letter-spacing:-0.103px">Ukraine&quot;</span></div>
</div>
<div class="vl" style="left:314.5px;height:546px"></div>
<div class="vl" style="left:408px;height:546px"></div>
<div class="vl" style="left:467px;height:546px"></div>
<div class="vl" style="left:613.5px;height:546px"></div>
<div class="vl" style="left:682px;height:546px"></div>
<div class="vl" style="left:767px;height:546px"></div>
<div class="abs" style="left:18.500px;top:0.400px;width:260.800px;height:43.800px;background:#2c52ba"><div class="abs" style="left:1.700px;top:1.700px;right:1.700px;bottom:1.700px;background:#192336"></div></div>
<div class="vl" style="left:279.400px;width:0.900px;height:546px;background:#7a8494"></div>
<div class="c lab" style="top:7.4px;-webkit-text-stroke:0.15px #fff"><span style="letter-spacing:-0.164px">WhisperGate Attacks</span></div>
<div class="abs" style="left:1.500px;top:546.300px;width:891px;height:7.400px;border-radius:4px;background:#3d4a5f"></div>
</div>
<div class="abs" style="left:927px;top:83.500px;width:7px;height:232px;border-radius:3.500px;background:#414d62"></div>
<div id="foot"><span>90%</span><svg style="left:887px;top:11.800px" width="6" height="4" viewBox="0 0 6 4" fill="none" stroke="#fff" stroke-width="1.300" stroke-linecap="round" stroke-linejoin="round"><path d="M0.700 0.800L3 2.900 5.300 0.800"/></svg></div>
</div>
<div id="winborder"></div>
</body></html>
